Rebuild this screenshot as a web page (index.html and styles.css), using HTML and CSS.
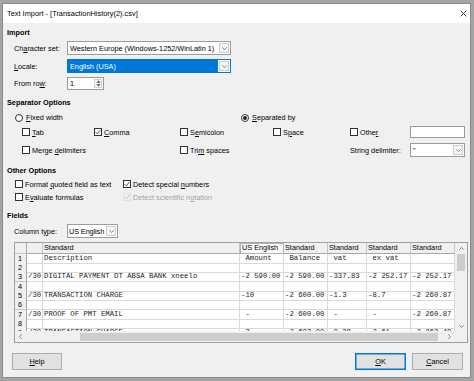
FILE: index.html
```html
<!DOCTYPE html>
<html>
	<head>
		<meta charset="utf-8">
		<title>Text Import</title>
		<link rel="stylesheet" href="styles.css">
	</head>
	<body>
		<!-- the dialog window -->
		<div class="dialog">
			<!-- title bar -->
			<div class="titleBar">
				<span>Text Import - [TransactionHistory(2).csv]</span>
				<svg class="closeIcon" width="7" height="7" viewBox="0 0 7 7"><path d="M0.6 0.6L6.4 6.4M6.4 0.6L0.6 6.4" stroke="#333" stroke-width="0.9"/></svg>
			</div>

			<div class="main">
				<!-- Import -->
				<div class="heading hImport">Import</div>
				<div class="row fieldRow rCharset">
					<div class="lbl">Ch<u>a</u>racter set:</div>
					<div class="select wide">
						<div class="val">Western Europe (Windows-1252/WinLatin 1)</div>
						<div class="drop"><svg width="5" height="3" viewBox="0 0 5 3"><path d="M0.3 0.3L2.5 2.5L4.7 0.3" fill="none" stroke="#555" stroke-width="0.7"/></svg></div>
					</div>
				</div>
				<div class="row fieldRow rLocale">
					<div class="lbl"><u>L</u>ocale:</div>
					<div class="select wide locale">
						<div class="val">English (USA)</div>
						<div class="drop"><svg width="5" height="3" viewBox="0 0 5 3"><path d="M0.3 0.3L2.5 2.5L4.7 0.3" fill="none" stroke="#555" stroke-width="0.7"/></svg></div>
					</div>
				</div>
				<div class="row fieldRow rFrom">
					<div class="lbl">From ro<u>w</u>:</div>
					<div class="spin">
						<div class="val">1</div>
						<div class="spinBtns">
							<svg width="5" height="3" viewBox="0 0 5 3"><path d="M0.5 2.7L2.5 0.4L4.5 2.7Z" fill="#444"/></svg>
							<svg width="5" height="3" viewBox="0 0 5 3"><path d="M0.5 0.3L2.5 2.6L4.5 0.3Z" fill="#444"/></svg>
						</div>
					</div>
				</div>

				<!-- Separator Options -->
				<div class="heading hSep">Separator Options</div>
				<div class="row rFixed">
					<div class="opt optFixed"><span class="rb"></span><span><u>F</u>ixed width</span></div>
					<div class="opt"><span class="rb on"></span><span><u>S</u>eparated by</span></div>
				</div>
				<div class="row rTab">
					<div class="opt w72"><span class="cb"></span><span><u>T</u>ab</span></div>
					<div class="opt w86"><span class="cb"><svg width="6" height="6" viewBox="0 0 6 6"><path d="M0.6 3.1L2.3 4.8L5.4 1" fill="none" stroke="#222" stroke-width="0.8"/></svg></span><span><u>C</u>omma</span></div>
					<div class="opt w93"><span class="cb"></span><span>S<u>e</u>micolon</span></div>
					<div class="opt w77"><span class="cb"></span><span>S<u>p</u>ace</span></div>
					<div class="opt w60"><span class="cb"></span><span>Othe<u>r</u></span></div>
					<div class="textBox"></div>
				</div>
				<div class="row rMerge">
					<div class="opt w158"><span class="cb"></span><span>Merge <u>d</u>elimiters</span></div>
					<div class="opt w170"><span class="cb"></span><span>Tri<u>m</u> spaces</span></div>
					<div class="opt w60"><span>Strin<u>g</u> delimiter:</span></div>
					<div class="select small">
						<div class="val">"</div>
						<div class="drop"><svg width="5" height="3" viewBox="0 0 5 3"><path d="M0.3 0.3L2.5 2.5L4.7 0.3" fill="none" stroke="#555" stroke-width="0.7"/></svg></div>
					</div>
				</div>

				<!-- Other Options -->
				<div class="heading hOther">Other Options</div>
				<div class="row rFormat">
					<div class="opt w108"><span class="cb"></span><span>Format <u>q</u>uoted field as text</span></div>
					<div class="opt"><span class="cb"><svg width="6" height="6" viewBox="0 0 6 6"><path d="M0.6 3.1L2.3 4.8L5.4 1" fill="none" stroke="#222" stroke-width="0.8"/></svg></span><span>Detect special <u>n</u>umbers</span></div>
				</div>
				<div class="row rEval">
					<div class="opt w108"><span class="cb"></span><span>E<u>v</u>aluate formulas</span></div>
					<div class="opt disabled"><span class="cb"><svg width="6" height="6" viewBox="0 0 6 6"><path d="M0.6 3.1L2.3 4.8L5.4 1" fill="none" stroke="#bdbdbd" stroke-width="0.8"/></svg></span><span>Detect scientific n<u>o</u>tation</span></div>
				</div>

				<!-- Fields -->
				<div class="heading hFields">Fields</div>
				<div class="row fieldRow rColType">
					<div class="lbl">Column t<u>y</u>pe:</div>
					<div class="select colType">
						<div class="val">US English</div>
						<div class="drop"><svg width="5" height="3" viewBox="0 0 5 3"><path d="M0.3 0.3L2.5 2.5L4.7 0.3" fill="none" stroke="#555" stroke-width="0.7"/></svg></div>
					</div>
				</div>

				<!-- preview grid -->
				<div class="grid">
					<div class="sheet">
						<div class="sRow sHead">
							<div class="num"></div><div class="hc"></div><div class="hc">Standard</div><div class="hc hSel">US English</div><div class="hc">Standard</div><div class="hc">Standard</div><div class="hc">Standard</div><div class="hc">Standard</div>
						</div>
						<div class="sRow">
							<div class="num">1</div><div class="c"></div><div class="c">Description</div><div class="c"> Amount</div><div class="c"> Balance</div><div class="c"> vat</div><div class="c"> ex vat</div><div class="c"></div>
						</div>
						<div class="sRow">
							<div class="num">2</div><div class="c"></div><div class="c"></div><div class="c"></div><div class="c"></div><div class="c"></div><div class="c"></div><div class="c"></div>
						</div>
						<div class="sRow">
							<div class="num">3</div><div class="c">/30</div><div class="c">DIGITAL PAYMENT DT ABSA BANK xneelo</div><div class="c">-2 590.00</div><div class="c">-2 590.00</div><div class="c">-337.83</div><div class="c">-2 252.17</div><div class="c">-2 252.17</div>
						</div>
						<div class="sRow">
							<div class="num">4</div><div class="c"></div><div class="c"></div><div class="c"></div><div class="c"></div><div class="c"></div><div class="c"></div><div class="c"></div>
						</div>
						<div class="sRow">
							<div class="num">5</div><div class="c">/30</div><div class="c">TRANSACTION CHARGE</div><div class="c">-10</div><div class="c">-2 600.00</div><div class="c">-1.3</div><div class="c">-8.7</div><div class="c">-2 260.87</div>
						</div>
						<div class="sRow">
							<div class="num">6</div><div class="c"></div><div class="c"></div><div class="c"></div><div class="c"></div><div class="c"></div><div class="c"></div><div class="c"></div>
						</div>
						<div class="sRow">
							<div class="num">7</div><div class="c">/30</div><div class="c">PROOF OF PMT EMAIL</div><div class="c"> -</div><div class="c">-2 600.00</div><div class="c"> -</div><div class="c"> -</div><div class="c">-2 260.87</div>
						</div>
						<div class="sRow">
							<div class="num">8</div><div class="c"></div><div class="c"></div><div class="c"></div><div class="c"></div><div class="c"></div><div class="c"></div><div class="c"></div>
						</div>
						<div class="sRow">
							<div class="num">9</div><div class="c">/30</div><div class="c">TRANSACTION CHARGE</div><div class="c">-3</div><div class="c">-2 603.00</div><div class="c">-0.39</div><div class="c">-2.61</div><div class="c">-2 263.48</div>
						</div>
					</div>
					<!-- vertical scrollbar -->
					<div class="vScroll">
						<div class="arrow"><svg width="5" height="3" viewBox="0 0 5 3"><path d="M0.3 2.7L2.5 0.5L4.7 2.7" fill="none" stroke="#555" stroke-width="0.7"/></svg></div>
						<div class="vThumb"></div>
						<div class="arrow arrowEnd"><svg width="5" height="3" viewBox="0 0 5 3"><path d="M0.3 0.3L2.5 2.5L4.7 0.3" fill="none" stroke="#555" stroke-width="0.7"/></svg></div>
					</div>
					<!-- horizontal scrollbar -->
					<div class="hScroll">
						<div class="arrow"><svg width="3" height="5" viewBox="0 0 3 5"><path d="M2.7 0.3L0.5 2.5L2.7 4.7" fill="none" stroke="#555" stroke-width="0.7"/></svg></div>
						<div class="hThumb"></div>
						<div class="arrow arrowEnd"><svg width="3" height="5" viewBox="0 0 3 5"><path d="M0.3 0.3L2.5 2.5L0.3 4.7" fill="none" stroke="#555" stroke-width="0.7"/></svg></div>
					</div>
					<div class="corner"></div>
				</div>

				<!-- buttons -->
				<div class="row btnRow">
					<div class="btn btnHelp"><span><u>H</u>elp</span></div>
					<div class="btn btnOk"><span><u>O</u>K</span></div>
					<div class="btn"><span><u>C</u>ancel</span></div>
				</div>
			</div>
		</div>
	</body>
</html>
```

FILE: styles.css
```css
*{
	margin: 0;
	padding: 0;
	box-sizing: border-box;
}

body{
	width: 474px;
	height: 381px;
	overflow: hidden;
	/* the window behind the dialog */
	background-color: #a4a4a4;
	font-family: "Liberation Sans", Arial, sans-serif;
	font-size: 7.3px;
	color: #000;
}

u{
	text-decoration-thickness: 0.6px;
	text-underline-offset: 1px;
}

/* dialog frame */
.dialog{
	width: 469px;
	height: 375px;
	margin: 3px 0 0 2px;
	background-color: #f0f0f0;
	border: 1px solid #8a8a8a;
}

.titleBar{
	height: 19px;
	background-color: #fff;
	display: flex;
	align-items: center;
	justify-content: space-between;
	padding: 0 3px 0 4px;
	font-size: 7.4px;
}

.main{
	padding-left: 4px;
}

.row{
	display: flex;
	align-items: center;
}

/* bold section titles */
.heading{
	height: 10px;
	line-height: 10px;
	font-weight: bold;
}
.hImport{ margin-top: 5px; }
.hSep{ margin-top: 8px; }
.hOther{ margin-top: 9px; }
.hFields{ margin-top: 9px; }

/* label + control rows */
.fieldRow{
	height: 14px;
}
.lbl{
	width: 60px;
	padding-left: 7px;
	flex-shrink: 0;
}
.rCharset{ margin-top: 3px; }
.rLocale{ margin-top: 4px; }
.rFrom{ margin-top: 4px; height: 13px; }
.rColType{ margin-top: 3px; }

/* combo boxes */
.select{
	height: 14px;
	display: flex;
	align-items: center;
	background-color: #fff;
	border: 1px solid #9c9c9c;
}
.select .val{
	flex: 1;
	height: 100%;
	display: flex;
	align-items: center;
	padding-left: 2px;
	white-space: nowrap;
	overflow: hidden;
}
.wide{ width: 164px; }
.small{ width: 55px; }
.colType{ width: 51px; }
.colType .val{
	padding-left: 1px;
	letter-spacing: -0.1px;
}
.locale{
	border-color: #0078d7;
}
.locale .val{
	background-color: #0078d7;
	color: #fff;
}
.drop{
	width: 10px;
	height: 10px;
	margin: 0 1px;
	border: 1px solid #cdcdcd;
	background-color: #f6f6f6;
	display: flex;
	align-items: center;
	justify-content: center;
	flex-shrink: 0;
}

/* spin field */
.spin{
	width: 37px;
	height: 13px;
	display: flex;
	background-color: #fff;
	border: 1px solid #9c9c9c;
}
.spin .val{
	flex: 1;
	padding-left: 2px;
	line-height: 11px;
}
.spinBtns{
	width: 8px;
	margin: 1px;
	border: 1px solid #d0d0d0;
	background-color: #f6f6f6;
	display: flex;
	flex-direction: column;
	align-items: center;
	justify-content: space-around;
}

/* checkbox / radio items */
.opt{
	display: flex;
	align-items: center;
	white-space: nowrap;
	flex-shrink: 0;
}
.cb{
	width: 8px;
	height: 8px;
	margin-right: 2px;
	border: 1px solid #333;
	background-color: #fff;
	display: flex;
	align-items: center;
	justify-content: center;
	flex-shrink: 0;
}
.rb{
	width: 8px;
	height: 8px;
	margin-right: 3px;
	border: 1px solid #333;
	border-radius: 50%;
	background-color: #fff;
	display: flex;
	align-items: center;
	justify-content: center;
}
.rb.on::after{
	content: "";
	width: 4px;
	height: 4px;
	border-radius: 50%;
	background-color: #222;
}
.disabled{
	color: #a3a3a3;
}
.disabled .cb{
	border-color: #e0e0e0;
	background-color: transparent;
}

.rFixed{
	height: 11px;
	margin-top: 4px;
	padding-left: 8px;
}
.optFixed{ width: 226px; }

.rTab{
	height: 12px;
	margin-top: 3px;
	padding-left: 15px;
}
.rMerge{
	height: 14px;
	margin-top: 5px;
	padding-left: 15px;
}
.w60{ width: 60px; }
.w72{ width: 72px; }
.w77{ width: 77px; }
.w86{ width: 86px; }
.w93{ width: 93px; }
.w108{ width: 108px; }
.w158{ width: 158px; }
.w170{ width: 170px; }

.textBox{
	width: 55px;
	height: 12px;
	background-color: #fff;
	border: 1px solid #9c9c9c;
}

.rFormat{
	height: 10px;
	margin-top: 3px;
	padding-left: 8px;
}
.rEval{
	height: 10px;
	margin-top: 3px;
	padding-left: 8px;
}

/* preview grid */
.grid{
	width: 454px;
	height: 101px;
	margin: 4px 0 0 7px;
	border: 1px solid #a0a0a0;
	background-color: #fff;
	display: grid;
	grid-template-columns: 1fr 12px;
	grid-template-rows: 1fr 11px;
}
.sheet{
	overflow: hidden;
}
.sRow{
	display: grid;
	grid-template-columns: 12px 16px 197px 44px 44px 39px 44px 44px;
	height: 9.33px;
}
.sHead{
	height: 10.7px;
}
.num{
	background-color: #f0f0f0;
	border-right: 1px solid #a8a8a8;
	border-bottom: 1px solid #c6c6c6;
	padding-left: 3px;
	line-height: 9px;
}
.hc{
	background-color: #f0f0f0;
	border-right: 1px solid #c6c6c6;
	border-bottom: 1px solid #a8a8a8;
	padding-left: 1px;
	line-height: 10px;
	white-space: nowrap;
	overflow: hidden;
}
.hSel{
	background-color: #fafafa;
	border: 1px solid #b4b4b4;
	line-height: 8px;
}
.c{
	border-right: 1px solid #dadada;
	border-bottom: 1px solid #dadada;
	font-family: "Liberation Mono", monospace;
	font-size: 7.3px;
	line-height: 9px;
	padding-left: 1px;
	white-space: pre;
	overflow: hidden;
	color: #1e1e1e;
}

/* scrollbars */
.vScroll{
	background-color: #f0f0f0;
	display: flex;
	flex-direction: column;
	align-items: center;
}
.vScroll .arrow{
	height: 10px;
	display: flex;
	align-items: center;
}
.vThumb{
	width: 8px;
	height: 17px;
	margin-top: 1px;
	background-color: #cdcdcd;
}
.arrowEnd{
	margin-top: auto;
}
.hScroll{
	background-color: #f0f0f0;
	display: flex;
	align-items: center;
}
.hScroll .arrow{
	width: 11px;
	display: flex;
	justify-content: center;
}
.hScroll .arrowEnd{
	margin-top: 0;
	margin-left: auto;
}
.hThumb{
	width: 358px;
	height: 8px;
	margin-left: 54px;
	background-color: #cdcdcd;
}
.corner{
	background-color: #f0f0f0;
}

/* bottom buttons */
.btnRow{
	height: 17px;
	margin-top: 10px;
	padding-right: 7px;
	gap: 6px;
}
.btn{
	width: 51px;
	height: 17px;
	background-color: #e1e1e1;
	border: 1px solid #adadad;
	display: flex;
	align-items: center;
	justify-content: center;
}
.btnHelp{
	width: 50px;
	margin-left: 5px;
	margin-right: auto;
}
.btnOk{
	border-color: #0078d7;
	box-shadow: inset 0 0 0 0.5px #0078d7;
}
```
